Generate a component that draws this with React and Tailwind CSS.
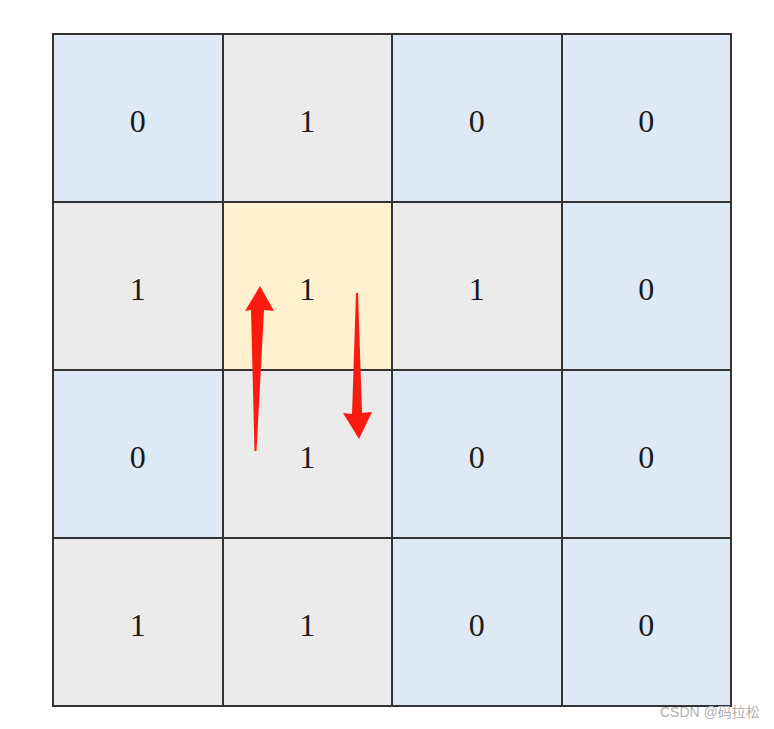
import React from "react";

const grid = [
  [0, 1, 0, 0],
  [1, 1, 1, 0],
  [0, 1, 0, 0],
  [1, 1, 0, 0],
];

const cellColor = (r, c, v) => {
  if (r === 1 && c === 1) return "bg-[#fff0cf]";
  return v === 1 ? "bg-[#ebebeb]" : "bg-[#dde9f5]";
};

const App = () => {
  return (
    <div className="relative h-[729px] w-[774px] bg-white overflow-hidden">
      <div className="pt-[33px] pl-[52px]">
        <div className="grid w-max grid-cols-[repeat(4,169.5px)] grid-rows-[repeat(4,168px)] border-l-2 border-t-2 border-[#333333]">
          {grid.map((row, r) =>
            row.map((v, c) => (
              <div
                key={`${r}-${c}`}
                className={`flex items-center justify-center border-r-2 border-b-2 border-[#333333] ${cellColor(r, c, v)}`}
              >
                <span className="pt-[6px] text-[32px] leading-none text-[#1a1a1a] font-['Liberation_Serif',serif]">
                  {v}
                </span>
              </div>
            ))
          )}
        </div>
      </div>

      {/* arrows drawn over the grid */}
      <svg
        className="pointer-events-none absolute left-0 top-0"
        width="774"
        height="729"
        viewBox="0 0 774 729"
      >
        <path
          d="M260 286 L274 311 L264 310 L256.5 451 L254.5 451 L251 310 L245 311 Z"
          fill="#fb1a10"
        />
        <path
          d="M356 293 L358 293 L362 413 L372 412 L359 439 L343 413 L352 414 Z"
          fill="#fb1a10"
        />
      </svg>

      <div className="absolute left-[660px] top-[702px] text-[14px] text-[#b0b0b0] font-['Liberation_Sans','Noto_Sans_CJK_SC',sans-serif]">
        CSDN @码拉松
      </div>
    </div>
  );
};

export default App;
